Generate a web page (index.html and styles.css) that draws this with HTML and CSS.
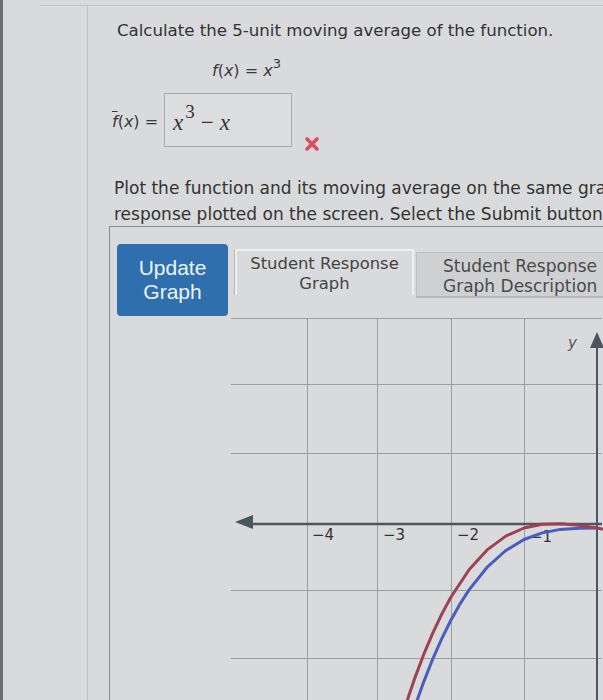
FILE: index.html
```html
<!DOCTYPE html>
<html lang="en">
<head>
<meta charset="utf-8">
<title>Moving average</title>
<link rel="stylesheet" href="styles.css">
</head>
<body>
<div class="screen">
  <div class="topline"></div>
  <div class="layout">
    <div class="gutter"></div>
    <main class="content">
      <p class="question">Calculate the 5-unit moving average of the function.</p>
      <div class="given"><span class="fn">f</span>(<span class="fn">x</span>) = <span class="fn">x</span><sup>3</sup></div>
      <div class="answer-row">
        <span class="lhs"><span class="fbar">f</span>(<span class="fn">x</span>) =</span>
        <span class="answer-box"><span class="mv">x</span><sup>3</sup><span class="minus">−</span><span class="mv">x</span></span>
        <svg class="wrong" width="16" height="16" viewBox="0 0 16 16" aria-label="incorrect"><path d="M3 3 L13 13 M13 3 L3 13"/></svg>
      </div>
      <p class="instructions">Plot the function and its moving average on the same gra<br>response plotted on the screen. Select the Submit button</p>
      <section class="panel">
        <div class="toolbar">
          <button class="update-btn">Update<br>Graph</button>
          <div class="tab tab-active">Student Response<br>Graph</div>
          <div class="tab tab-inactive">Student Response<br>Graph Description</div>
        </div>
        <div class="graph">
          <svg class="plot" width="371" height="382" viewBox="0 0 371 382">
            <g class="grid">
              <line x1="0" y1="0.5" x2="371" y2="0.5"/>
              <line x1="0" y1="66.5" x2="371" y2="66.5"/>
              <line x1="0" y1="135.5" x2="371" y2="135.5"/>
              <line x1="0" y1="272.5" x2="371" y2="272.5"/>
              <line x1="0" y1="340.5" x2="371" y2="340.5"/>
              <line x1="76.5" y1="0" x2="76.5" y2="382"/>
              <line x1="146.5" y1="0" x2="146.5" y2="382"/>
              <line x1="220.5" y1="0" x2="220.5" y2="382"/>
              <line x1="293.5" y1="0" x2="293.5" y2="382"/>
            </g>
            <line class="axis" x1="18" y1="206" x2="371" y2="206"/>
            <polygon class="arrow" points="4,204 22,197 22,211"/>
            <line class="axis yaxis" x1="366" y1="26" x2="366" y2="382"/>
            <polygon class="arrow" points="366,14 359,30 373,30"/>
            <text class="tick" x="81" y="222">−4</text>
            <text class="tick" x="152" y="222">−3</text>
            <text class="tick" x="226" y="222">−2</text>
            <text class="tick" x="299" y="224">−1</text>
            <text class="ylabel" x="337" y="30">y</text>
            <polyline class="curve blue" points="366,210 347.75,210.2 329.5,211.4 311.25,214.9 293,221.5 274.75,232.5 256.5,248.8 238.25,271.6 229.125,285.8 220,302 210.875,320.4 201.75,341 192.625,364.1 183.5,389.7 174.375,418"/>
            <polyline class="curve red" points="371,211 366,210 347.75,207.3 329.5,205.7 311.25,206.2 293,210 274.75,218.1 256.5,231.6 238.25,251.5 220,279 210.875,295.9 201.75,315.1 192.625,336.7 183.5,360.9 174.375,387.8 165.25,417.6"/>
          </svg>
        </div>
      </section>
    </main>
  </div>
</div>
</body>
</html>
```

FILE: styles.css
```css
html, body {
  margin: 0;
  padding: 0;
}

body {
  background: #d9dadb;
  font-family: "DejaVu Sans", Verdana, sans-serif;
  color: #333;
  overflow: hidden;
}

.screen {
  width: 603px;
  height: 700px;
  overflow: hidden;
  border-left: 3px solid #6e6e70;
  box-sizing: border-box;
}

.topline {
  height: 5px;
  margin-left: 37px;
  border-bottom: 1px solid #c3c4c5;
}

.layout {
  display: flex;
  height: 694px;
}

.gutter {
  width: 84px;
  flex: none;
  border-right: 1px solid #c0c0c2;
}

.content {
  flex: 1;
  padding-left: 21px;
  min-width: 0;
}

.question {
  margin: 15px 0 0 8px;
  font-size: 16.6px;
  line-height: 20px;
  white-space: nowrap;
}

.given {
  margin: 20px 0 0 103px;
  font-size: 16px;
  line-height: 20px;
  color: #3a3a3a;
}

.fn {
  font-style: italic;
}

.given sup {
  font-size: 13px;
  line-height: 0;
  vertical-align: 8px;
}

.answer-row {
  display: flex;
  align-items: flex-start;
  margin: 12px 0 0 3px;
}

.lhs {
  font-size: 16px;
  line-height: 20px;
  margin-top: 19px;
  color: #3a3a3a;
  white-space: nowrap;
}

.fbar {
  font-style: italic;
  text-decoration: overline;
}

.answer-box {
  width: 128px;
  height: 54px;
  margin-left: 6px;
  border: 1px solid #a9aaab;
  background: #dcddde;
  font-family: "Liberation Serif", "DejaVu Serif", serif;
  font-size: 23px;
  line-height: 22px;
  padding: 18px 0 0 8px;
  box-sizing: border-box;
  color: #333;
  white-space: nowrap;
}

.mv {
  font-style: italic;
}

.answer-box sup {
  font-size: 19px;
  line-height: 0;
  vertical-align: 12px;
  margin-left: 2px;
}

.minus {
  margin: 0 6px 0 6px;
}

.wrong {
  display: block;
  margin: 43px 0 0 12px;
  flex: none;
}

.wrong path {
  stroke: #dc4a62;
  stroke-width: 3.6;
  stroke-linecap: round;
  fill: none;
}

.instructions {
  margin: 23px 0 0 5px;
  font-size: 17px;
  line-height: 26px;
  white-space: nowrap;
}

.panel {
  margin-top: -1px;
  border-top: 1px solid #8d8e90;
  border-left: 1px solid #8d8e90;
  height: 480px;
}

.toolbar {
  display: flex;
  align-items: flex-start;
  padding: 17px 0 0 7px;
}

.update-btn {
  width: 111px;
  height: 72px;
  flex: none;
  background: #2f6fae;
  color: #eef3f8;
  border: none;
  border-radius: 4px;
  font-family: "Liberation Sans", Arial, sans-serif;
  font-size: 21px;
  line-height: 24px;
  padding: 0;
}

.tab {
  flex: none;
  line-height: 20px;
  text-align: center;
  color: #444;
  box-sizing: border-box;
  white-space: nowrap;
}

.tab-active {
  width: 179px;
  height: 46px;
  margin: 5px 0 0 7px;
  padding-top: 3px;
  font-size: 16.4px;
  border: 2px solid #efefef;
  border-bottom: none;
  box-shadow: -1px 0 0 #b9b9ba;
}

.tab-inactive {
  width: 192px;
  height: 46px;
  margin: 8px 0 0 2px;
  padding: 3px 0 0 26px;
  font-size: 17px;
  text-align: left;
  background: #cfd0d1;
  border: 1px solid #bfc0c1;
  border-bottom: 2px solid #b5b6b7;
  color: #4a4a4a;
}

.graph {
  margin: 2px 0 0 121px;
}

.plot {
  display: block;
  overflow: visible;
}

.grid line {
  stroke: #9c9d9f;
  stroke-width: 1;
}

.axis {
  stroke: #4f565e;
  stroke-width: 2.5;
}

.yaxis {
  stroke: #4a5766;
  stroke-width: 2;
}

.arrow {
  fill: #4a5560;
}

.tick {
  font-family: "DejaVu Sans", Verdana, sans-serif;
  font-size: 15px;
  fill: #333;
}

.ylabel {
  font-family: "DejaVu Sans", Verdana, sans-serif;
  font-style: italic;
  font-size: 15px;
  fill: #555;
}

.curve {
  fill: none;
  stroke-width: 3;
  stroke-linejoin: round;
  stroke-linecap: round;
}

.blue {
  stroke: #4a5cc0;
}

.red {
  stroke: #9e4150;
}
```
